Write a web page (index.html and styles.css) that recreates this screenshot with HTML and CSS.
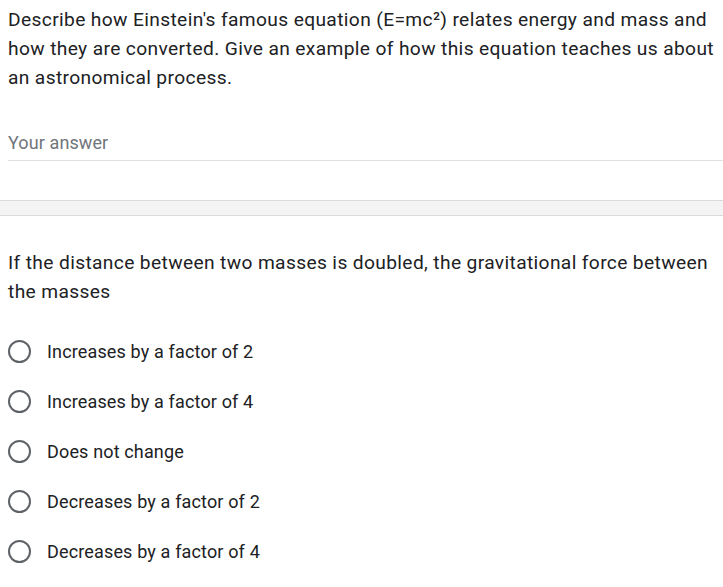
FILE: index.html
```html
<!DOCTYPE html>
<html lang="en">
<head>
  <meta charset="UTF-8" />
  <meta name="viewport" content="width=device-width, initial-scale=1.0"/>
  <title>Physics Quiz</title>
  <link rel="stylesheet" href="styles.css">
</head>
<body>
  <div class="question">
    <div class="question-title">Describe how Einstein's famous equation (E=mc²) relates energy and mass and how they are converted. Give an example of how this equation teaches us about an astronomical process.</div>
    <div class="answer">
      <input type="text" class="answer-input" placeholder="Your answer">
    </div>
  </div>

  <div class="separator"></div>

  <div class="question question-choice">
    <div class="question-title">If the distance between two masses is doubled, the gravitational force between the masses</div>
    <div class="options">
      <label class="option"><span class="radio"></span>Increases by a factor of 2</label>
      <label class="option"><span class="radio"></span>Increases by a factor of 4</label>
      <label class="option"><span class="radio"></span>Does not change</label>
      <label class="option"><span class="radio"></span>Decreases by a factor of 2</label>
      <label class="option"><span class="radio"></span>Decreases by a factor of 4</label>
    </div>
  </div>
</body>
</html>
```

FILE: styles.css
```css
body {
  margin: 0;
  padding: 0;
  font-family: Roboto, 'Liberation Sans', Arial, sans-serif;
  color: #202124;
  background: #fff;
}

.question {
  padding: 5px 0 0 8px;
}

.question-title {
  font-size: 19.2px;
  line-height: 29px;
  letter-spacing: 0.36px;
}

.answer {
  padding-top: 36px;
  height: 72px;
  box-sizing: content-box;
}

.answer-input {
  display: block;
  width: 100%;
  box-sizing: border-box;
  border: none;
  border-bottom: 1px solid #e0e0e0;
  padding: 4px 0 6px 0;
  font-family: inherit;
  font-size: 18px;
  line-height: 22px;
  letter-spacing: 0.1px;
  color: #202124;
  outline: none;
  background: transparent;
}

.answer-input::placeholder {
  color: #70757a;
}

.separator {
  height: 14px;
  background: #f4f4f4;
  border-top: 1px solid #dadce0;
  border-bottom: 1px solid #dadce0;
}

.question-choice {
  padding-top: 32px;
}

.options {
  padding-top: 20px;
}

.option {
  display: flex;
  align-items: center;
  height: 50px;
  font-size: 18px;
  letter-spacing: 0.15px;
  cursor: pointer;
}

.radio {
  width: 19px;
  height: 19px;
  border: 2.5px solid #5f6368;
  border-radius: 50%;
  margin-right: 16px;
  flex-shrink: 0;
}
```
